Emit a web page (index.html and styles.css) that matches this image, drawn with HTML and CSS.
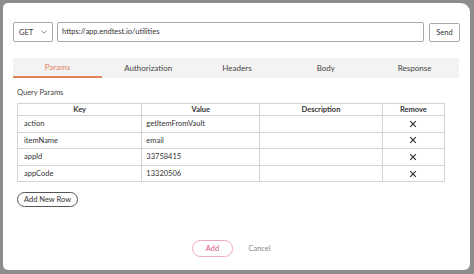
FILE: index.html
```html
<!DOCTYPE html>
<html lang="en">
<head>
  <meta charset="UTF-8" />
  <title>API Request</title>
  <link rel="stylesheet" href="styles.css">
</head>
<body>
<div class="backdrop">
  <div class="modal">
    <div class="request-bar">
      <div class="method">
        <span>GET</span>
        <svg class="chev" width="6" height="4" viewBox="0 0 6 4"><path d="M0.5 0.8 L3 3.2 L5.5 0.8" fill="none" stroke="#777" stroke-width="0.9"/></svg>
      </div>
      <div class="url">https://app.endtest.io/utilities</div>
      <button class="send">Send</button>
    </div>

    <div class="tabs">
      <div class="tab active">Params</div>
      <div class="tab">Authorization</div>
      <div class="tab">Headers</div>
      <div class="tab">Body</div>
      <div class="tab">Response</div>
    </div>

    <div class="tab-body">
      <div class="section-label">Query Params</div>
      <table class="params">
        <thead>
          <tr><th class="c-key">Key</th><th class="c-val">Value</th><th class="c-desc">Description</th><th class="c-rm">Remove</th></tr>
        </thead>
        <tbody>
          <tr><td>action</td><td>getItemFromVault</td><td></td><td class="rm"><svg width="8" height="8" viewBox="0 0 8 8"><path d="M1.2 1.2 L6.8 6.8 M6.8 1.2 L1.2 6.8" stroke="#2a2a2a" stroke-width="1.1"/></svg></td></tr>
          <tr><td>itemName</td><td>email</td><td></td><td class="rm"><svg width="8" height="8" viewBox="0 0 8 8"><path d="M1.2 1.2 L6.8 6.8 M6.8 1.2 L1.2 6.8" stroke="#2a2a2a" stroke-width="1.1"/></svg></td></tr>
          <tr><td>appId</td><td>33758415</td><td></td><td class="rm"><svg width="8" height="8" viewBox="0 0 8 8"><path d="M1.2 1.2 L6.8 6.8 M6.8 1.2 L1.2 6.8" stroke="#2a2a2a" stroke-width="1.1"/></svg></td></tr>
          <tr><td>appCode</td><td>13320506</td><td></td><td class="rm"><svg width="8" height="8" viewBox="0 0 8 8"><path d="M1.2 1.2 L6.8 6.8 M6.8 1.2 L1.2 6.8" stroke="#2a2a2a" stroke-width="1.1"/></svg></td></tr>
        </tbody>
      </table>
      <button class="add-row">Add New Row</button>
    </div>

    <div class="footer">
      <button class="btn-add">Add</button>
      <button class="btn-cancel">Cancel</button>
    </div>
  </div>
</div>
</body>
</html>
```

FILE: styles.css
```css
body {
  margin: 0;
  font-family: 'Lato', 'Liberation Sans', Arial, sans-serif;
  color: #333;
}
.backdrop {
  width: 474px;
  height: 274px;
  background: #8d8d8d;
  padding: 3px 4px 4px 3px;
  box-sizing: border-box;
}
.modal {
  background: #fff;
  height: 267px;
  border-radius: 5px 9px 6px 5px;
  padding: 19px 11px 0 10px;
  box-sizing: border-box;
  display: flex;
  flex-direction: column;
}
.request-bar {
  display: flex;
  align-items: center;
  height: 20px;
}
.method {
  width: 40px;
  height: 20px;
  box-sizing: border-box;
  border: 1px solid #a9a9a9;
  border-radius: 2px;
  display: flex;
  align-items: center;
  justify-content: space-between;
  padding: 0 5px 0 5px;
  font-size: 7.5px;
  color: #333;
}
.url {
  flex: 1;
  height: 20px;
  box-sizing: border-box;
  margin-left: 4px;
  border: 1px solid #a9a9a9;
  border-radius: 2px;
  font-size: 7.5px;
  line-height: 18px;
  padding-left: 4px;
  color: #333;
}
.send {
  width: 31px;
  height: 19px;
  margin-left: 5px;
  margin-right: -1px;
  border: 1px solid #a9a9a9;
  border-radius: 2px;
  background: #fff;
  font-family: inherit;
  font-size: 7.5px;
  color: #333;
  padding: 0;
}
.tabs {
  margin-top: 16px;
  display: flex;
  background: #f3f3f3;
  height: 20px;
}
.tab {
  flex: 1;
  text-align: center;
  font-size: 8px;
  line-height: 20px;
  color: #444;
}
.tab.active {
  color: #e0825a;
  border-bottom: 2px solid #e0825a;
  line-height: 19px;
  box-sizing: border-box;
  margin-right: 2px;
}
.tab-body {
  padding: 0 4px;
}
.section-label {
  font-size: 7.5px;
  color: #444;
  margin-top: 10px;
  height: 15px;
}
.params {
  width: 428px;
  border-collapse: collapse;
  font-size: 7.5px;
  color: #333;
}
.params th, .params td {
  border: 1px solid #d4d4d4;
  padding: 0 0 0 6px;
}
.params th {
  height: 11px;
  font-weight: 700;
  text-align: center;
  padding: 0;
  color: #333;
}
.params td {
  height: 15.6px;
}
.params td:nth-child(2) {
  padding-left: 4px;
}
.c-key { width: 125px; }
.c-val { width: 118px; }
.c-desc { width: 123px; }
.c-rm { width: 62px; }
.params td.rm {
  text-align: center;
  padding: 0;
}
.params td.rm svg {
  display: block;
  margin: 0 auto;
}
.add-row {
  margin-top: 10px;
  height: 15px;
  width: 61px;
  border: 1px solid #555;
  border-radius: 8px;
  background: #fff;
  font-family: inherit;
  font-size: 7.5px;
  color: #333;
  padding: 0;
}
.footer {
  margin-top: auto;
  margin-bottom: 13px;
  display: flex;
  justify-content: center;
  gap: 6px;
}
.btn-add, .btn-cancel {
  width: 41px;
  height: 17px;
  background: #fff;
  font-family: inherit;
  font-size: 7.5px;
  padding: 0;
}
.btn-add {
  border: 1px solid #ecaac5;
  border-radius: 9px;
  color: #d9588e;
}
.btn-cancel {
  border: none;
  color: #888;
}
```
